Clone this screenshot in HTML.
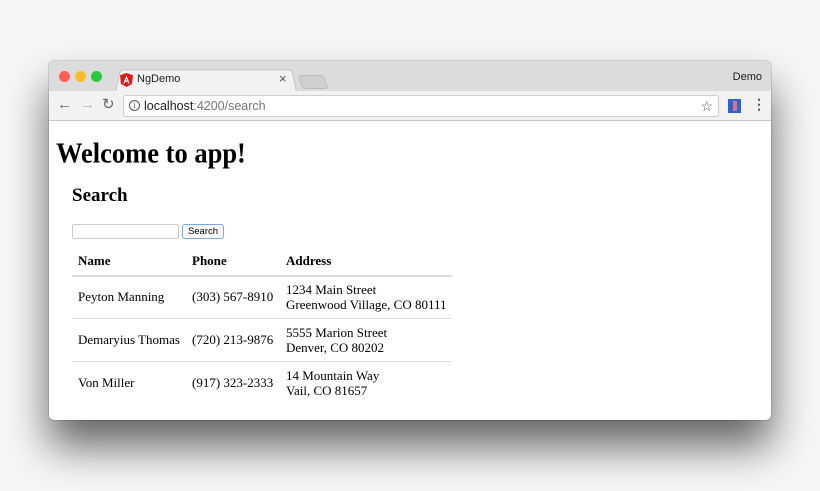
<!DOCTYPE html>
<html><head><meta charset="utf-8"><style>
*{margin:0;padding:0;box-sizing:border-box}
body{width:820px;height:491px;background:#f6f6f6;position:relative;overflow:hidden;font-family:"Liberation Sans",sans-serif}
.win{position:absolute;left:49px;top:61px;width:722px;height:359px;background:#fff;border-radius:5px;box-shadow:0 26px 42px rgba(0,0,0,.6),0 0 0 1px rgba(0,0,0,.12);overflow:hidden}
.title{position:absolute;left:0;top:0;width:722px;height:30px;background:#dcdcdc}
.dot{position:absolute;top:10px;width:11px;height:11px;border-radius:50%}
.tab{position:absolute;left:66px;top:7px;width:182px;height:24px;background:#f2f2f2;border:1px solid #c4c4c4;border-bottom:none;border-radius:4px 4px 0 0;transform:perspective(60px) rotateX(8deg);transform-origin:bottom}
.tabtxt{position:absolute;left:88px;top:12px;font-size:11px;color:#222}
.tool{position:absolute;left:0;top:30px;width:722px;height:30px;background:#f2f2f2;border-bottom:1px solid #c9c9c9}
.url{position:absolute;left:74px;top:4px;width:596px;height:22px;background:#fff;border:1px solid #cfcfcf;border-radius:3px;font-size:12.5px;line-height:20px;padding-left:20px;color:#222}
.serif{font-family:"Liberation Serif",serif;position:absolute;color:#000}
</style></head><body>
<div class="win">
 <div class="title">
  <div class="dot" style="left:10px;background:#fc5e57"></div>
  <div class="dot" style="left:26px;background:#fdbc2e"></div>
  <div class="dot" style="left:42px;background:#28c840"></div>
  <div class="tab"></div>
  <svg style="position:absolute;left:71px;top:12px" width="13" height="14" viewBox="0 0 13 14"><path d="M6.5 0L13 2.3 12 11 6.5 14 1 11 0 2.3Z" fill="#dd1b16"/><path d="M6.5 2.5L3.3 10.5h1.3l.7-1.8h2.4l.7 1.8h1.3ZM5.7 7.6l.8-2 .8 2Z" fill="#fff"/></svg>
  <div class="tabtxt">NgDemo</div>
  <div style="position:absolute;left:230px;top:10px;font-size:13px;color:#555">×</div>
  <div style="position:absolute;left:251px;top:14px;width:26px;height:14px;background:#d0d0d0;border:1px solid #bbb;border-radius:3px;transform:skewX(20deg)"></div>
  <div style="position:absolute;right:9px;top:10px;font-size:11px;color:#222">Demo</div>
 </div>
 <div class="tool">
  <div style="position:absolute;left:8px;top:5px;font-size:15px;color:#666">←</div>
  <div style="position:absolute;left:31px;top:5px;font-size:15px;color:#bbb">→</div>
  <div style="position:absolute;left:53px;top:4px;font-size:15px;color:#666">↻</div>
  <div class="url"><span style="position:absolute;left:5px;top:4px;width:11px;height:11px;border:1px solid #555;border-radius:50%;font-size:8px;line-height:9px;text-align:center;color:#555">i</span>localhost<span style="color:#777">:4200/search</span><span style="position:absolute;right:5px;top:0;color:#555;font-size:14px">☆</span></div>
  <div style="position:absolute;left:679px;top:8px;width:13px;height:14px;background:#2b63d9"><div style="margin:2px auto;width:4px;height:10px;background:#e87070"></div></div>
  <div style="position:absolute;left:703px;top:5px;font-size:14px;color:#555;font-weight:bold">⋮</div>
 </div>
 <div class="serif" style="left:7px;top:76px;font-size:26.5px;font-weight:bold;transform:scaleY(1.06);transform-origin:left top">Welcome to app!</div>
 <div class="serif" style="left:23px;top:124px;font-size:19px;font-weight:bold">Search</div>
 <div style="position:absolute;left:23px;top:163px;width:107px;height:15px;border:1px solid #ccc;border-radius:2px"></div>
 <div style="position:absolute;left:133px;top:163px;width:42px;height:15px;border:1px solid #7aa7e8;border-radius:3px;font-size:9.5px;line-height:13px;text-align:center;background:#fafafa">Search</div>
 <div style="position:absolute;left:23px;top:214px;width:380px;height:2px;background:#ddd"></div>
 <div style="position:absolute;left:23px;top:257px;width:380px;height:1px;background:#ddd"></div>
 <div style="position:absolute;left:23px;top:300px;width:380px;height:1px;background:#ddd"></div>
 <div class="serif" style="left:29px;top:192px;font-size:13px;font-weight:bold">Name</div>
 <div class="serif" style="left:143px;top:192px;font-size:13px;font-weight:bold">Phone</div>
 <div class="serif" style="left:237px;top:192px;font-size:13px;font-weight:bold">Address</div>
 <div class="serif" style="left:29px;top:228px;font-size:13px">Peyton Manning</div>
 <div class="serif" style="left:143px;top:228px;font-size:13px">(303) 567-8910</div>
 <div class="serif" style="left:237px;top:221px;font-size:13px;line-height:15px">1234 Main Street<br>Greenwood Village, CO 80111</div>
 <div class="serif" style="left:29px;top:271px;font-size:13px">Demaryius Thomas</div>
 <div class="serif" style="left:143px;top:271px;font-size:13px">(720) 213-9876</div>
 <div class="serif" style="left:237px;top:264px;font-size:13px;line-height:15px">5555 Marion Street<br>Denver, CO 80202</div>
 <div class="serif" style="left:29px;top:314px;font-size:13px">Von Miller</div>
 <div class="serif" style="left:143px;top:314px;font-size:13px">(917) 323-2333</div>
 <div class="serif" style="left:237px;top:307px;font-size:13px;line-height:15px">14 Mountain Way<br>Vail, CO 81657</div>
</div>
</body></html>
